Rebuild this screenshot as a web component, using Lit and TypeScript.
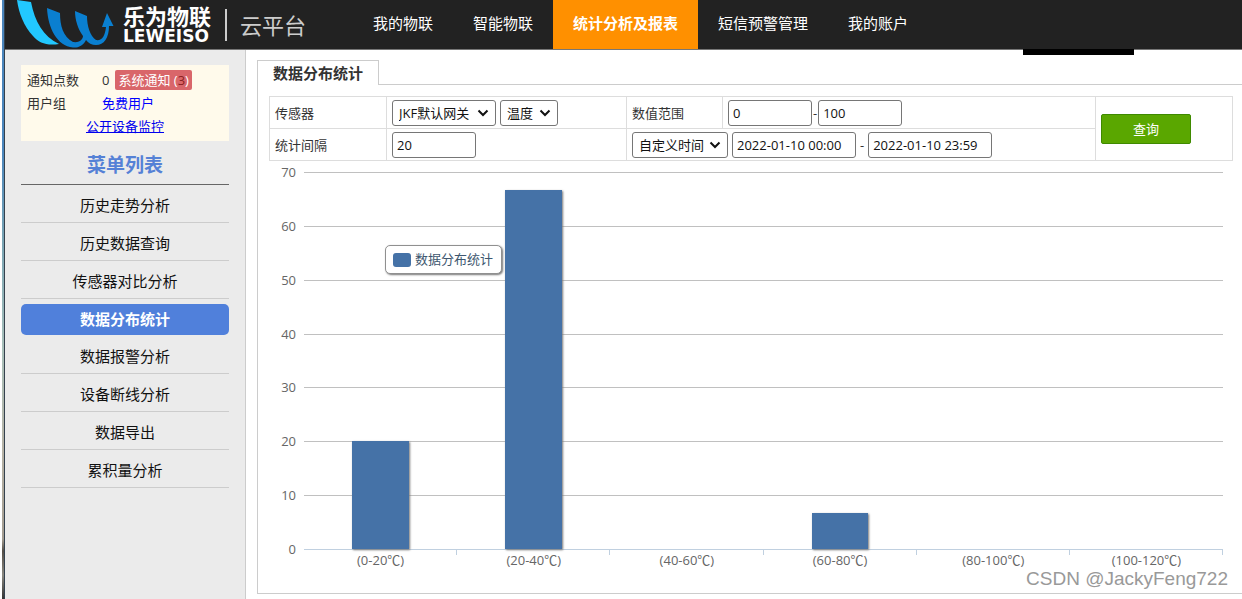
import { LitElement, html, css } from "lit";
import { customElement, property } from "lit/decorators.js";
import { classMap } from "lit/directives/class-map.js";
import { styleMap } from "lit/directives/style-map.js";

interface Bucket {
  label: string;
  value: number;
}

@customElement("site-header")
class SiteHeader extends LitElement {
  static styles = css`
    :host {
      display: flex;
      position: relative;
      height: 49px;
      background: #222;
      border-bottom: 1px solid #777;
      color: #fff;
    }
    .brand {
      display: flex;
      align-items: center;
      width: 348px;
      flex: none;
    }
    .mark {
      width: 118px;
      height: 49px;
      flex: none;
      display: block;
    }
    .names {
      display: flex;
      flex-direction: column;
      gap: 3px;
      width: 91px;
    }
    .cn {
      font-size: 22px;
      line-height: 20px;
      font-weight: 700;
    }
    .en {
      font: 700 17px/14px "DejaVu Sans", sans-serif;
    }
    .bar {
      width: 2px;
      height: 32px;
      margin: 0 13px 0 11px;
      background: #ccc;
    }
    .platform {
      font-size: 22px;
      line-height: 30px;
      color: #ccc;
    }
    nav {
      display: flex;
    }
    a {
      padding: 0 20px;
      font-size: 15px;
      line-height: 47px;
      color: #fff;
      text-decoration: none;
      white-space: nowrap;
    }
    a.on {
      background: #ff9000;
      font-weight: 700;
    }
    .flap {
      position: absolute;
      right: 108px;
      top: 49px;
      width: 111px;
      height: 6px;
      background: #000;
    }
  `;

  items = ["我的物联", "智能物联", "统计分析及报表", "短信预警管理", "我的账户"];

  render() {
    return html`
      <div class="brand">
        <svg class="mark" viewBox="5 0 118 49" aria-hidden="true">
          <path fill="#22c8ff" d="M17 0 L31 2 C35 22 43 36 59 44 C47 46 39 43 33 36 C24 26 19 14 17 0Z" />
          <path
            fill="#0a7fd0"
            d="M47 8 L60 13 C60 25 63 37 73 42 C81 43 83 38 83 36 C78 29 75 20 75 11 L87 16 C87 26 90 36 96 40 C102 41 105 36 106 27 L102 27 L107 13 L113.500 26 L109 26 C109 38 104 45 96 45 C92 45 88 43 86 40 C83 46 78 48 73 47.500 C57 46 48 28 47 8Z"
          />
        </svg>
        <div class="names"><span class="cn">乐为物联</span><span class="en">LEWEISO</span></div>
        <span class="bar"></span>
        <span class="platform">云平台</span>
      </div>
      <nav>
        ${this.items.map((t, i) => html`<a href="#" class=${classMap({ on: i === 2 })}>${t}</a>`)}
      </nav>
      <span class="flap"></span>
    `;
  }
}

@customElement("side-menu")
class SideMenu extends LitElement {
  static styles = css`
    :host {
      display: block;
      padding: 15px 16px;
      background: #ebebeb;
      border-right: 1px solid #ccc;
    }
    .info {
      display: grid;
      grid-template-columns: 75px 1fr;
      grid-auto-rows: 23px;
      align-items: center;
      padding: 3px 0 4px 6px;
      background: #fffaeb;
      font-size: 13px;
      line-height: 20px;
      color: #333;
    }
    .points {
      display: flex;
      gap: 6px;
    }
    .notice {
      padding: 0 3px;
      background: #d9666a;
      border-radius: 2px;
      color: #fff;
      text-decoration: none;
    }
    .count {
      color: #8a2020;
    }
    .group {
      color: #00f;
      text-decoration: none;
    }
    .open {
      grid-column: 1 / -1;
      justify-self: center;
      margin-right: 6px;
      color: #00e;
    }
    h2 {
      margin: 0;
      padding: 5px 0 0;
      border-bottom: 1px solid #666;
      font-size: 19px;
      line-height: 38px;
      text-align: center;
      color: #5581d6;
    }
    ul {
      margin: 0;
      padding: 0;
      list-style: none;
    }
    li {
      height: 37px;
      border-bottom: 1px solid #ccc;
    }
    li.on {
      padding: 5px 0 1px;
      height: 31px;
      border-bottom: 0;
    }
    a.item {
      display: block;
      font-size: 15px;
      line-height: 40px;
      text-align: center;
      color: #111;
      text-decoration: none;
    }
    li.on a.item {
      line-height: 31px;
      border-radius: 5px;
      background: #5080db;
      font-weight: 700;
      color: #fff;
    }
  `;

  items = [
    "历史走势分析",
    "历史数据查询",
    "传感器对比分析",
    "数据分布统计",
    "数据报警分析",
    "设备断线分析",
    "数据导出",
    "累积量分析",
  ];

  render() {
    return html`
      <div class="info">
        <span>通知点数</span>
        <span class="points">0 <a class="notice" href="#">系统通知 (<span class="count">3</span>)</a></span>
        <span>用户组</span>
        <a class="group" href="#">免费用户</a>
        <a class="open" href="#">公开设备监控</a>
      </div>
      <h2>菜单列表</h2>
      <ul>
        ${this.items.map(
          (t, i) => html`<li class=${classMap({ on: i === 3 })}><a class="item" href="#">${t}</a></li>`
        )}
      </ul>
    `;
  }
}

@customElement("query-form")
class QueryForm extends LitElement {
  static styles = css`
    :host {
      display: block;
    }
    table {
      width: 100%;
      border-collapse: collapse;
      table-layout: fixed;
      font-size: 13px;
      color: #333;
    }
    td,
    th {
      box-sizing: border-box;
      height: 32px;
      padding: 0 0 0 5px;
      border: 1px solid #ddd;
      font-weight: 400;
      line-height: 20px;
      text-align: left;
      white-space: nowrap;
    }
    .c1 {
      width: 117px;
    }
    .c2 {
      width: 240px;
    }
    .c3 {
      width: 96px;
    }
    .c5 {
      width: 137px;
    }
    .row {
      display: flex;
      align-items: center;
      gap: 4px;
    }
    .row.tight {
      gap: 1px;
    }
    input,
    select {
      box-sizing: border-box;
      height: 26px;
      margin: 0;
      border: 1px solid #767676;
      border-radius: 3px;
      background: #fff;
      font: inherit;
      color: #111;
    }
    input {
      width: 84px;
      padding: 0 4px;
    }
    input.date {
      width: 124px;
    }
    select {
      appearance: none;
      width: 96px;
      padding: 0 0 0 6px;
      background: #fff
        url("data:image/svg+xml,%3Csvg xmlns='http://www.w3.org/2000/svg' width='12' height='8'%3E%3Cpath d='M1.500 1.500 L6 6 L10.500 1.500' fill='none' stroke='%23111' stroke-width='2'/%3E%3C/svg%3E")
        right 6px center / 12px 8px no-repeat;
    }
    select.gateway {
      width: 104px;
    }
    select.kind {
      width: 58px;
    }
    button {
      width: 90px;
      height: 30px;
      padding: 0;
      border: 1px solid #3f8a00;
      border-radius: 2px;
      background: #5aa700;
      font: inherit;
      color: #fff;
    }
  `;

  render() {
    return html`
      <form @submit=${(e: Event) => e.preventDefault()}>
        <table>
          <colgroup>
            <col class="c1" /><col class="c2" /><col class="c3" /><col /><col class="c5" />
          </colgroup>
          <tr>
            <th><label for="gateway">传感器</label></th>
            <td>
              <div class="row">
                <select id="gateway" class="gateway"><option>JKF默认网关</option></select>
                <select class="kind" aria-label="传感器"><option>温度</option></select>
              </div>
            </td>
            <th><label for="low">数值范围</label></th>
            <td>
              <div class="row tight">
                <input id="low" value="0" />-<input aria-label="数值范围" value="100" />
              </div>
            </td>
            <td rowspan="2"><button type="submit">查询</button></td>
          </tr>
          <tr>
            <th><label for="step">统计间隔</label></th>
            <td><div class="row"><input id="step" value="20" /></div></td>
            <td colspan="2">
              <div class="row">
                <select aria-label="自定义时间"><option>自定义时间</option></select>
                <input class="date" aria-label="自定义时间" value="2022-01-10 00:00" />-<input
                  class="date"
                  aria-label="自定义时间"
                  value="2022-01-10 23:59"
                />
              </div>
            </td>
          </tr>
        </table>
      </form>
    `;
  }
}

@customElement("bar-chart")
class BarChart extends LitElement {
  static styles = css`
    :host {
      display: grid;
      grid-template-columns: 27px 1fr;
      grid-template-rows: minmax(200px, 1fr) 20px;
      column-gap: 8px;
      font-size: 13px;
      color: #666;
    }
    .scale,
    .lines {
      display: flex;
      flex-direction: column;
      justify-content: space-between;
    }
    .scale span {
      height: 1px;
      line-height: 1px;
      text-align: right;
    }
    .plot {
      display: grid;
      position: relative;
    }
    .lines,
    .bars {
      grid-area: 1 / 1;
    }
    .lines span {
      height: 1px;
      background: #c0c0c0;
    }
    .lines span:last-child {
      background: #c0d0e0;
    }
    .bars,
    .labels {
      display: grid;
      grid-auto-flow: column;
      grid-auto-columns: 1fr;
    }
    .bars {
      align-items: end;
      justify-items: center;
      padding-bottom: 1px;
    }
    .bar {
      width: 37%;
      background: #4572a7;
      box-shadow: 1px 1px 2px #777;
    }
    .labels {
      grid-column: 2;
    }
    .labels span {
      display: flex;
      justify-content: center;
      line-height: 20px;
      background: linear-gradient(#c0d0e0, #c0d0e0) right top / 1px 5px no-repeat;
    }
    .legend {
      position: absolute;
      left: 81px;
      top: 73px;
      display: flex;
      align-items: center;
      gap: 4px;
      padding: 3px 8px 3px 7px;
      border: 1px solid #909090;
      border-radius: 5px;
      background: #fff;
      box-shadow: 1px 1px 2px #777;
      line-height: 21px;
      color: #3e576f;
    }
    .swatch {
      width: 18px;
      height: 14px;
      border-radius: 3px;
      background: #4572a7;
    }
  `;

  @property({ attribute: false }) data: Bucket[] = [];
  @property({ type: Number }) max = 70;

  render() {
    const marks = [70, 60, 50, 40, 30, 20, 10, 0];
    return html`
      <div class="scale">${marks.map((m) => html`<span>${m}</span>`)}</div>
      <div class="plot">
        <div class="lines">${marks.map(() => html`<span></span>`)}</div>
        <div class="bars">
          ${this.data.map((d) =>
            d.value
              ? html`<div class="bar" style=${styleMap({ height: `${(d.value / this.max) * 100}%` })}></div>`
              : html`<div></div>`
          )}
        </div>
        <div class="legend"><span class="swatch"></span>数据分布统计</div>
      </div>
      <div class="labels">${this.data.map((d) => html`<span>${d.label}</span>`)}</div>
    `;
  }
}

@customElement("app-root")
class AppRoot extends LitElement {
  static styles = css`
    :host {
      display: grid;
      grid-template-columns: 5px 1fr;
      position: relative;
      box-sizing: border-box;
      min-height: 100vh;
      background: #fff;
      overflow: hidden;
      font-family: "Open Sans", "Noto Sans CJK SC", sans-serif;
    }
    .edge {
      box-sizing: border-box;
      margin-left: 2px;
      border-right: 1px solid #34414d;
      background: linear-gradient(#4b86bd 0%, #4b86bd 25%, #79a4b4 40%, #a9c0ba 58%, #b7b3a6 75%, #a39c90 90%, #554f48 92%, #8a8880 96%, #333 100%);
    }
    .page {
      display: flex;
      flex-direction: column;
    }
    .body {
      flex: 1;
      display: grid;
      grid-template-columns: 241px 1fr;
    }
    main {
      display: flex;
      flex-direction: column;
      padding: 10px 0 5px 11px;
    }
    h1 {
      align-self: flex-start;
      position: relative;
      margin: 0 0 -1px;
      padding: 0 15px;
      border: 1px solid #ccc;
      border-bottom: 0;
      background: #fff;
      font-size: 15px;
      line-height: 24px;
      color: #333;
    }
    .panel {
      flex: 1;
      display: flex;
      flex-direction: column;
      padding: 11px 9px 23px 11px;
      border: 1px solid #ccc;
      border-right: 0;
    }
    bar-chart {
      flex: 1;
      margin: 11px 10px 0 0;
    }
    .credit {
      position: absolute;
      right: 14px;
      bottom: 8px;
      font: 19px/24px "Liberation Sans", sans-serif;
      color: #999;
    }
  `;

  data: Bucket[] = [
    { label: "(0-20℃)", value: 20 },
    { label: "(20-40℃)", value: 66.7 },
    { label: "(40-60℃)", value: 0 },
    { label: "(60-80℃)", value: 6.7 },
    { label: "(80-100℃)", value: 0 },
    { label: "(100-120℃)", value: 0 },
  ];

  render() {
    return html`
      <div class="edge"></div>
      <div class="page">
        <site-header></site-header>
        <div class="body">
          <side-menu></side-menu>
          <main>
            <h1>数据分布统计</h1>
            <div class="panel">
              <query-form></query-form>
              <bar-chart .data=${this.data}></bar-chart>
            </div>
          </main>
        </div>
      </div>
      <span class="credit">CSDN @JackyFeng722</span>
    `;
  }
}
